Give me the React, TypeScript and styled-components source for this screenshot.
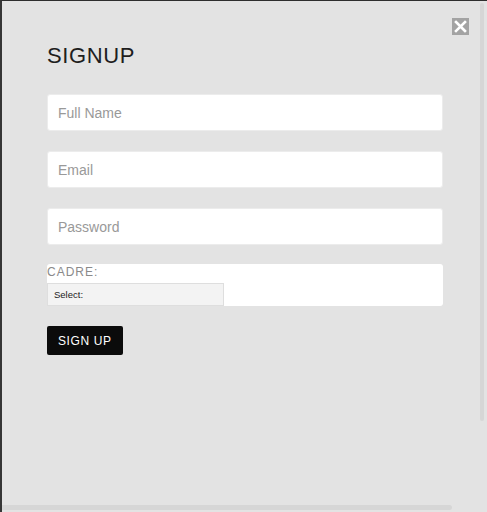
import React from "react";
import styled, { createGlobalStyle } from "styled-components";

const GlobalStyle = createGlobalStyle`
  html, body {
    margin: 0;
    padding: 0;
    background: #e3e3e3;
    font-family: "Liberation Sans", Arial, sans-serif;
  }
  * { box-sizing: border-box; }
`;

const Frame = styled.div`
  position: relative;
  width: 487px;
  height: 512px;
  overflow: hidden;
  background: #e3e3e3;
  border-top: 1px solid #2e2e2e;
  border-left: 2px solid #363636;
`;

const Content = styled.div`
  padding: 42px 0 0 45px;
`;

const Title = styled.h1`
  margin: 0 0 25px;
  font-size: 22px;
  line-height: 26px;
  font-weight: normal;
  letter-spacing: 0.6px;
  color: #1e1e1e;
`;

const Form = styled.form`
  display: flex;
  flex-direction: column;
  width: 396px;
`;

const Input = styled.input`
  height: 37px;
  margin-bottom: 20px;
  padding: 0 10px;
  border: 1px solid #ececec;
  border-radius: 3px;
  background: #ffffff;
  font-family: "Liberation Sans", Arial, sans-serif;
  font-size: 14px;
  color: #333;
  outline: none;
  &::placeholder {
    color: #999999;
  }
`;

const CadreBox = styled.div`
  display: flex;
  flex-direction: column;
  height: 42px;
  margin-top: -1px;
  background: #ffffff;
  border-radius: 3px;
`;

const CadreLabel = styled.label`
  height: 19px;
  line-height: 16px;
  font-size: 12px;
  letter-spacing: 1px;
  color: #8a8a8a;
`;

const SelectBox = styled.div`
  width: 177px;
  height: 23px;
  padding-left: 6px;
  display: flex;
  align-items: center;
  background: #f3f3f3;
  border: 1px solid #dedede;
  font-size: 9.5px;
  color: #222;
`;

const SubmitButton = styled.button`
  align-self: flex-start;
  margin-top: 20px;
  height: 29px;
  padding: 0 11px 0 11px;
  background: #0b0b0b;
  border: none;
  border-radius: 2px;
  color: #ffffff;
  font-family: "Liberation Sans", Arial, sans-serif;
  font-size: 12px;
  letter-spacing: 0.6px;
  cursor: pointer;
`;

const CloseButton = styled.button`
  position: absolute;
  top: 17px;
  right: 18px;
  width: 17px;
  height: 17px;
  padding: 0;
  border: none;
  background: #a3a3a3;
  display: flex;
  align-items: center;
  justify-content: center;
  cursor: pointer;
`;

const VScrollThumb = styled.div`
  position: absolute;
  top: 2px;
  right: 3px;
  width: 4px;
  height: 418px;
  border-radius: 2px;
  background: #d6d6d6;
`;

const HScrollThumb = styled.div`
  position: absolute;
  left: -2px;
  bottom: 2px;
  width: 452px;
  height: 5px;
  border-radius: 3px;
  background: #d6d6d6;
`;

export default function App() {
  return (
    <>
      <GlobalStyle />
      <Frame>
        <CloseButton aria-label="Close">
          <svg width="13" height="13" viewBox="0 0 13 13">
            <path
              d="M2 2 L11 11 M11 2 L2 11"
              stroke="#ffffff"
              strokeWidth="2.6"
              strokeLinecap="square"
            />
          </svg>
        </CloseButton>
        <Content>
          <Title>SIGNUP</Title>
          <Form onSubmit={(e) => e.preventDefault()}>
            <Input type="text" placeholder="Full Name" />
            <Input type="email" placeholder="Email" />
            <Input type="password" placeholder="Password" />
            <CadreBox>
              <CadreLabel>CADRE:</CadreLabel>
              <SelectBox>Select:</SelectBox>
            </CadreBox>
            <SubmitButton type="submit">SIGN UP</SubmitButton>
          </Form>
        </Content>
        <VScrollThumb />
        <HScrollThumb />
      </Frame>
    </>
  );
}
